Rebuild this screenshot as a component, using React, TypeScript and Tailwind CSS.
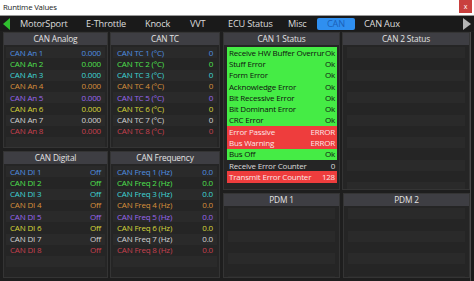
import React from 'react';

const FONT = { fontFamily: '"Open Sans", "Noto Sans", sans-serif' };

const ROW_COLORS = [
  'text-[#4f8fe0]',
  'text-[#4fe04f]',
  'text-[#3fd6d6]',
  'text-[#d8903c]',
  'text-[#9966ee]',
  'text-[#d6d63a]',
  'text-[#d4d4d4]',
  'text-[#c8404f]',
];

const tabs = [
  { name: 'MotorSport', w: 'w-[66px]' },
  { name: 'E-Throttle', w: 'w-[59px]' },
  { name: 'Knock', w: 'w-[45px]' },
  { name: 'VVT', w: 'w-[38px]' },
  { name: 'ECU Status', w: 'w-[60px]' },
  { name: 'Misc', w: 'w-[38px]' },
  { name: 'CAN', w: 'w-[38px]', active: true },
  { name: 'CAN Aux', w: 'w-[60px]' },
];

type Status = { label: string; value: string; kind: 'ok' | 'err' | 'none' };

const can1: Status[] = [
  { label: 'Receive HW Buffer Overrur', value: 'Ok', kind: 'ok' },
  { label: 'Stuff Error', value: 'Ok', kind: 'ok' },
  { label: 'Form Error', value: 'Ok', kind: 'ok' },
  { label: 'Acknowledge Error', value: 'Ok', kind: 'ok' },
  { label: 'Bit Recessive Error', value: 'Ok', kind: 'ok' },
  { label: 'Bit Dominant Error', value: 'Ok', kind: 'ok' },
  { label: 'CRC Error', value: 'Ok', kind: 'ok' },
  { label: 'Error Passive', value: 'ERROR', kind: 'err' },
  { label: 'Bus Warning', value: 'ERROR', kind: 'err' },
  { label: 'Bus Off', value: 'Ok', kind: 'ok' },
  { label: 'Receive Error Counter', value: '0', kind: 'none' },
  { label: 'Transmit Error Counter', value: '128', kind: 'err' },
];

const Panel: React.FC<{ title: string; className?: string; children?: React.ReactNode }> = ({ title, className, children }) => (
  <div className={`flex flex-col bg-[#252525] border border-[#343434] overflow-hidden ${className || ''}`}>
    <div className="h-[12px] shrink-0 bg-[#3e3e43] text-[#e4e4e4] text-[8.3px] tracking-[-0.15px] leading-[12px] text-center">{title}</div>
    <div className="flex-1 overflow-hidden pt-[2px] px-[2px]">{children}</div>
  </div>
);

const Stripes: React.FC<{ count: number }> = ({ count }) => (
  <>
    {Array.from({ length: count }).map((_, i) => (
      <div key={i} className={`h-[11.25px] ${i % 2 === 0 ? 'bg-[#2a2a2a]' : 'bg-[#252525]'}`}></div>
    ))}
  </>
);

const DataList: React.FC<{ label: (i: number) => string; value: string; fill: number }> = ({ label, value, fill }) => (
  <div>
    {ROW_COLORS.map((c, i) => (
      <div key={i} className={`h-[11.25px] flex items-center justify-between px-[4px] text-[8px] tracking-[-0.2px] ${c} ${i % 2 === 0 ? 'bg-[#2a2a2a]' : 'bg-[#252525]'}`}>
        <span>{label(i + 1)}</span>
        <span>{value}</span>
      </div>
    ))}
    <Stripes count={fill} />
  </div>
);

export default function App() {
  return (
    <div style={FONT} className="w-[474px] h-[281px] bg-[#1e1e1e] overflow-hidden flex flex-col">
      {/* title bar */}
      <div className="h-[16px] shrink-0 bg-white flex items-start justify-between border-b border-[#9a9a9a]">
        <span className="pl-[3px] pt-[2px] text-[7.8px] tracking-[-0.2px] leading-[10px] text-[#1a1a1a]">Runtime Values</span>
        <div className="w-[13px] h-[13px] mr-[2px] bg-[#c9403e] flex items-center justify-center text-white text-[7px] leading-none">x</div>
      </div>

      {/* tab strip */}
      <div className="h-[15px] shrink-0 bg-[#1a1a1a] flex items-center relative">
        <div className="w-[11px] flex items-center pl-[3px]">
          <svg width="7" height="12" viewBox="0 0 7 12">
            <polygon points="7,0 7,12 0,6" fill="#2fbf2f" />
          </svg>
        </div>
        {tabs.map(t => (
          <div key={t.name} className={`${t.w} h-[13px] flex items-center`}>
            {t.active ? (
              <div className="w-full h-[12px] rounded-[2px] bg-[#2f8ff0] text-[#1b5fb8] text-[9.2px] tracking-[-0.2px] leading-[12px] pl-[10px]">{t.name}</div>
            ) : (
              <span className="pl-[9px] text-[9.2px] tracking-[-0.2px] leading-[12px] text-[#dcdcdc]">{t.name}</span>
            )}
          </div>
        ))}
        <div className="absolute right-[3px] top-[2px]">
          <svg width="8" height="12" viewBox="0 0 8 12">
            <polygon points="0,0 8,6 0,12" fill="#b4b4b4" />
          </svg>
        </div>
      </div>

      {/* panels */}
      <div className="flex-1 flex pl-[3px] pt-[1px]">
        <div className="w-[217px] flex flex-col">
          <div className="h-[116px] flex gap-[2px]">
            <Panel title="CAN Analog" className="w-[105px]">
              <DataList label={i => `CAN An ${i}`} value="0.000" fill={2} />
            </Panel>
            <Panel title="CAN TC" className="flex-1">
              <DataList label={i => `CAN TC ${i} (°C)`} value="0" fill={2} />
            </Panel>
          </div>
          <div className="h-[127px] mt-[3px] flex gap-[2px]">
            <Panel title="CAN Digital" className="w-[105px]">
              <DataList label={i => `CAN DI ${i}`} value="Off" fill={3} />
            </Panel>
            <Panel title="CAN Frequency" className="flex-1">
              <DataList label={i => `CAN Freq ${i} (Hz)`} value="0.0" fill={3} />
            </Panel>
          </div>
        </div>

        <div className="w-[247px] ml-[3px] flex flex-col">
          <div className="h-[158px] flex gap-[2px]">
            <Panel title="CAN 1 Status" className="w-[117px]">
              <div className="pl-[1px]">
                {can1.map(s => (
                  <div
                    key={s.label}
                    className={`h-[11.3px] flex items-center justify-between px-[2px] text-[8px] tracking-[-0.2px] ${
                      s.kind === 'ok' ? 'bg-[#45ec45] text-[#101010]' : s.kind === 'err' ? 'bg-[#ee3d3d] text-[#fbe6e6]' : 'text-[#dadada]'
                    }`}
                  >
                    <span className="whitespace-nowrap">{s.label}</span>
                    <span>{s.value}</span>
                  </div>
                ))}
              </div>
            </Panel>
            <Panel title="CAN 2 Status" className="flex-1">
              <div className="px-[2px]">
                <Stripes count={13} />
              </div>
            </Panel>
          </div>
          <div className="h-[85px] mt-[3px] flex gap-[3px]">
            <Panel title="PDM 1" className="w-[117px]">
              <div className="px-[2px]">
                <Stripes count={7} />
              </div>
            </Panel>
            <Panel title="PDM 2" className="flex-1">
              <div className="px-[2px]">
                <Stripes count={7} />
              </div>
            </Panel>
          </div>
        </div>
        <div className="flex-1 border-l border-[#4a4a4a] bg-[#1a1a1a]"></div>
      </div>
    </div>
  );
}
